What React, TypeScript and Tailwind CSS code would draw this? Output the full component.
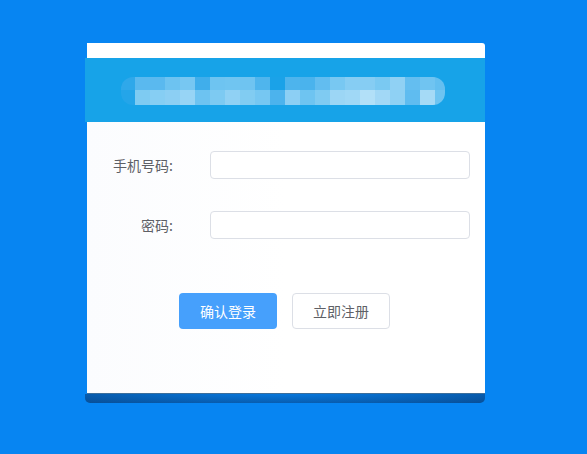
import React from 'react';

// pixelated (blurred) logo colours, two rows of mosaic cells
const topRow = [
  '#5ab9ef', '#5ab9ef', '#6dc3f1', '#77c7f2', '#40aeeb', '#6ec4f1', '#70c5f1', '#6fc4f1', '#4fb5ed', '#1aa2e8',
  '#4db4ed', '#4ab3ed', '#62bdf0', '#78c8f2', '#86cdf3', '#86cdf3', '#7ac9f2', '#90d1f4', '#64bef0', '#70c4f1',
];
const bottomRow = [
  '#7ecbf2', '#86cef3', '#8ccff3', '#97d4f5', '#6dc3f1', '#7dcaf2', '#90d1f4', '#81ccf2', '#76c7f2', '#4cb3ed',
  '#8ccff4', '#6ec4f1', '#7fcbf2', '#9cd6f5', '#a0d8f6', '#b2e0f8', '#a2d8f6', '#8fd1f4', '#5fbcf0', '#a5daf6',
];

const Mosaic: React.FC = () => (
  <svg width="324" height="28" viewBox="0 0 324 28">
    <defs>
      <clipPath id="mosaic-clip">
        <rect x="0" y="0" width="324" height="28" rx="12" />
      </clipPath>
    </defs>
    <g clipPath="url(#mosaic-clip)">
      <rect x="0" y="0" width="14" height="13" fill="#2fa8ea" />
      <rect x="0" y="13" width="14" height="15" fill="#24a5e9" />
      {topRow.map((c, i) => (
        <rect key={'t' + i} x={14 + i * 15} y="0" width="15" height="13" fill={c} />
      ))}
      {bottomRow.map((c, i) => (
        <rect key={'b' + i} x={14 + i * 15} y="13" width="15" height="15" fill={c} />
      ))}
      <rect x="314" y="0" width="10" height="13" fill="#64bff0" />
      <rect x="314" y="13" width="10" height="15" fill="#6ec4f1" />
    </g>
  </svg>
);

const FormRow: React.FC<{ label: string; type?: string }> = ({ label, type = 'text' }) => (
  <div className="flex items-center h-[28px]">
    <label className="w-[86px] text-right text-[14px] text-[#5e6066]">{label}</label>
    <input
      type={type}
      className="ml-[37px] w-[260px] h-[28px] rounded-[4px] border border-[#dcdfe6] bg-white px-3 text-[14px] outline-none"
    />
  </div>
);

const App: React.FC = () => {
  return (
    <div
      className="min-h-[454px] w-full bg-[#0785f2] pt-[43px] pl-[85px]"
      style={{ fontFamily: '"Noto Sans CJK SC", "Liberation Sans", sans-serif' }}
    >
      <div className="w-[400px]">
        {/* card */}
        <div className="ml-[2px] w-[398px] bg-white rounded-tr-[3px] pt-[15px]">
          <div className="-ml-[2px] w-[400px] h-[64px] bg-[#17a3e8] pl-[36px] pt-[19px]">
            <Mosaic />
          </div>

          <div className="h-[271px] pt-[29px] bg-gradient-to-r from-[#fbfcfe] via-white to-white">
            <FormRow label="手机号码:" />
            <div className="mt-[32px]">
              <FormRow label="密码:" type="password" />
            </div>

            <div className="flex gap-[15px] pl-[92px] mt-[54px]">
              <button className="w-[98px] h-[36px] rounded-[4px] bg-[#46a0fc] text-white text-[14px]">
                确认登录
              </button>
              <button className="w-[98px] h-[36px] rounded-[4px] border border-[#dcdfe6] bg-white text-[#5e6066] text-[14px]">
                立即注册
              </button>
            </div>
          </div>
        </div>

        {/* bottom shadow: darker toward the sides, like a lifted sheet */}
        <div className="ml-[2px] w-[398px] h-[1px] bg-[#3b6e9c]" />
        <div className="w-[400px] h-[9px] rounded-b-[5px] bg-[radial-gradient(ellipse_at_50%_-40%,rgba(7,120,225,0.3),rgba(8,60,120,0.75))]" />
      </div>
    </div>
  );
};

export default App;
